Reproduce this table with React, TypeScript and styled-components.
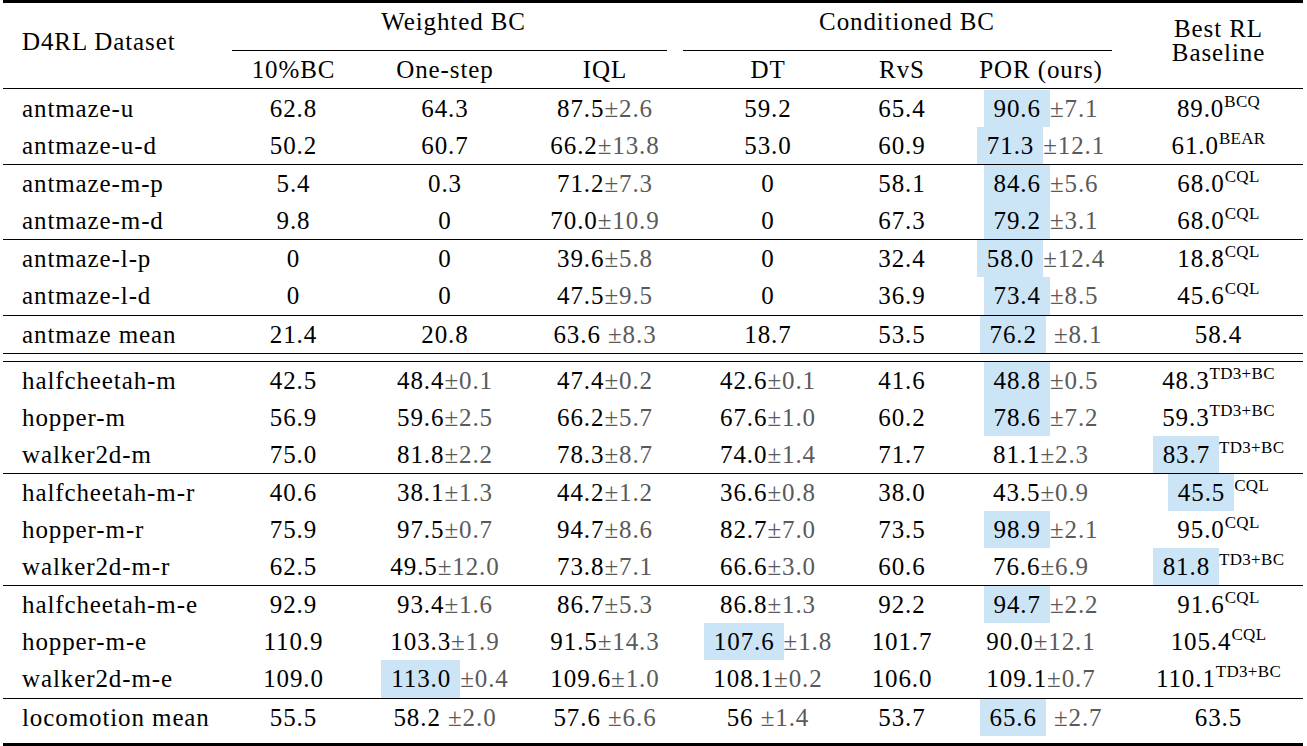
import React from 'react';
import styled, { createGlobalStyle } from 'styled-components';

const GlobalStyle = createGlobalStyle`
  body {
    margin: 0;
    background: #fff;
  }
`;

// column widths, picked so every column centre sits where the paper has it
const COLS = '224px 133px 170px 150px 176px 92px 186px 169px';

type Cell = { v: string; s?: string; hl?: boolean; sup?: string; gap?: boolean };

// "[90.6]±7.1" -> highlighted value, "63.6 ±8.3" -> spaced std, "89.0^BCQ" -> superscript
const parse = (raw: string): Cell => {
  const hl = raw.startsWith('[');
  const clean = raw.replace(/[[\]]/g, '');
  const [main, sup] = clean.split('^');
  const [v, s] = main.split('±');
  return { v: v.trim(), s, hl, sup, gap: v.endsWith(' ') };
};

const sections: { rows: string[][]; rule: 'single' | 'double' | 'last' }[] = [
  {
    rule: 'single',
    rows: [
      ['antmaze-u', '62.8', '64.3', '87.5±2.6', '59.2', '65.4', '[90.6]±7.1', '89.0^BCQ'],
      ['antmaze-u-d', '50.2', '60.7', '66.2±13.8', '53.0', '60.9', '[71.3]±12.1', '61.0^BEAR'],
    ],
  },
  {
    rule: 'single',
    rows: [
      ['antmaze-m-p', '5.4', '0.3', '71.2±7.3', '0', '58.1', '[84.6]±5.6', '68.0^CQL'],
      ['antmaze-m-d', '9.8', '0', '70.0±10.9', '0', '67.3', '[79.2]±3.1', '68.0^CQL'],
    ],
  },
  {
    rule: 'single',
    rows: [
      ['antmaze-l-p', '0', '0', '39.6±5.8', '0', '32.4', '[58.0]±12.4', '18.8^CQL'],
      ['antmaze-l-d', '0', '0', '47.5±9.5', '0', '36.9', '[73.4]±8.5', '45.6^CQL'],
    ],
  },
  {
    rule: 'double',
    rows: [['antmaze mean', '21.4', '20.8', '63.6 ±8.3', '18.7', '53.5', '[76.2] ±8.1', '58.4']],
  },
  {
    rule: 'single',
    rows: [
      ['halfcheetah-m', '42.5', '48.4±0.1', '47.4±0.2', '42.6±0.1', '41.6', '[48.8]±0.5', '48.3^TD3+BC'],
      ['hopper-m', '56.9', '59.6±2.5', '66.2±5.7', '67.6±1.0', '60.2', '[78.6]±7.2', '59.3^TD3+BC'],
      ['walker2d-m', '75.0', '81.8±2.2', '78.3±8.7', '74.0±1.4', '71.7', '81.1±2.3', '[83.7]^TD3+BC'],
    ],
  },
  {
    rule: 'single',
    rows: [
      ['halfcheetah-m-r', '40.6', '38.1±1.3', '44.2±1.2', '36.6±0.8', '38.0', '43.5±0.9', '[45.5]^CQL'],
      ['hopper-m-r', '75.9', '97.5±0.7', '94.7±8.6', '82.7±7.0', '73.5', '[98.9]±2.1', '95.0^CQL'],
      ['walker2d-m-r', '62.5', '49.5±12.0', '73.8±7.1', '66.6±3.0', '60.6', '76.6±6.9', '[81.8]^TD3+BC'],
    ],
  },
  {
    rule: 'single',
    rows: [
      ['halfcheetah-m-e', '92.9', '93.4±1.6', '86.7±5.3', '86.8±1.3', '92.2', '[94.7]±2.2', '91.6^CQL'],
      ['hopper-m-e', '110.9', '103.3±1.9', '91.5±14.3', '[107.6]±1.8', '101.7', '90.0±12.1', '105.4^CQL'],
      ['walker2d-m-e', '109.0', '[113.0]±0.4', '109.6±1.0', '108.1±0.2', '106.0', '109.1±0.7', '110.1^TD3+BC'],
    ],
  },
  {
    rule: 'last',
    rows: [['locomotion mean', '55.5', '58.2 ±2.0', '57.6 ±6.6', '56 ±1.4', '53.7', '[65.6] ±2.7', '63.5']],
  },
];

export default function App() {
  return (
    <Page>
      <GlobalStyle />
      <Table>
        <Header>
          <DatasetHead>D4RL Dataset</DatasetHead>
          <GroupHead $col="2 / 5">
            <GroupLabel>Weighted BC</GroupLabel>
            <CMidRule $left={5} $right={13} />
          </GroupHead>
          <GroupHead $col="5 / 8">
            <GroupLabel>Conditioned BC</GroupLabel>
            <CMidRule $left={3} $right={22} />
          </GroupHead>
          <BaselineHead>
            <HeadLine>Best RL</HeadLine>
            <HeadLine>Baseline</HeadLine>
          </BaselineHead>
          {['10%BC', 'One-step', 'IQL', 'DT', 'RvS', 'POR (ours)'].map((h) => (
            <SubHead key={h}>{h}</SubHead>
          ))}
        </Header>

        {sections.map((sec, i) => (
          <React.Fragment key={i}>
            <Section $rule={sec.rule}>
              {sec.rows.map((row) => (
                <Row key={row[0]}>
                  <NameCell>{row[0]}</NameCell>
                  {row.slice(1).map((raw, j) => {
                    const c = parse(raw);
                    return (
                      <ValueCell key={j}>
                        {c.hl ? (
                          <>
                            <Mark>{c.v}</Mark>
                            {(c.s || c.sup) && (
                              <Value $gap={c.gap}>
                                {c.s && <Std>±{c.s}</Std>}
                                {c.sup && <Sup>{c.sup}</Sup>}
                              </Value>
                            )}
                          </>
                        ) : (
                          <Value>
                            {c.v}
                            {c.s && (
                              <Std>
                                {c.gap ? ' ' : ''}±{c.s}
                              </Std>
                            )}
                            {c.sup && <Sup>{c.sup}</Sup>}
                          </Value>
                        )}
                      </ValueCell>
                    );
                  })}
                </Row>
              ))}
            </Section>
            {sec.rule === 'double' && <DoubleGap />}
          </React.Fragment>
        ))}
      </Table>
    </Page>
  );
}

const Page = styled.div`
  padding: 0 4px 0 3px;
  font-family: 'Liberation Serif', 'Times New Roman', serif;
  font-size: 25px;
  letter-spacing: 0.9px;
  color: #000;
`;

const Table = styled.div`
  width: 1300px;
  border-top: 3px solid #000;
  border-bottom: 3px solid #000;
`;

const Header = styled.div`
  display: grid;
  grid-template-columns: ${COLS};
  grid-template-rows: 48px 37px;
  border-bottom: 1px solid #000;
  margin-bottom: 1px;
  line-height: 37px;
`;

const DatasetHead = styled.div`
  grid-row: 1 / 3;
  grid-column: 1;
  padding: 20px 0 0 19px;
`;

const GroupHead = styled.div<{ $col: string }>`
  grid-row: 1;
  grid-column: ${({ $col }) => $col};
  display: flex;
  flex-direction: column;
`;

const GroupLabel = styled.div`
  text-align: center;
`;

const CMidRule = styled.div<{ $left: number; $right: number }>`
  margin: auto ${({ $right }) => $right}px 0 ${({ $left }) => $left}px;
  height: 1px;
  background: #000;
`;

const BaselineHead = styled.div`
  grid-row: 1 / 3;
  grid-column: 8;
  padding-top: 15px;
  text-align: center;
`;

const HeadLine = styled.div`
  height: 24px;
  line-height: 22px;
`;

const SubHead = styled.div`
  grid-row: 2;
  text-align: center;
`;

const Section = styled.div<{ $rule: 'single' | 'double' | 'last' }>`
  border-bottom: ${({ $rule }) => ($rule === 'last' ? 'none' : '1px solid #000')};
  padding-bottom: ${({ $rule }) => ($rule === 'last' ? '7px' : '0')};
`;

const DoubleGap = styled.div`
  height: 7px;
  border-bottom: 1px solid #000;
`;

const Row = styled.div`
  display: grid;
  grid-template-columns: ${COLS};
  height: 37.1px;
  line-height: 37px;
`;

const NameCell = styled.div`
  padding-left: 19px;
  white-space: nowrap;
`;

const ValueCell = styled.div`
  display: flex;
  justify-content: center;
  align-items: stretch;
  white-space: nowrap;
`;

const Mark = styled.span`
  padding: 0 9px 0 10px;
  background: #cce5f6;
`;

const Value = styled.span<{ $gap?: boolean }>`
  margin-left: ${({ $gap }) => ($gap ? '8px' : '0')};
`;

const Std = styled.span`
  color: #5a5a5a;
`;

const Sup = styled.span`
  font-size: 17px;
  letter-spacing: 0.3px;
  line-height: 1;
  vertical-align: 10px;
`;
